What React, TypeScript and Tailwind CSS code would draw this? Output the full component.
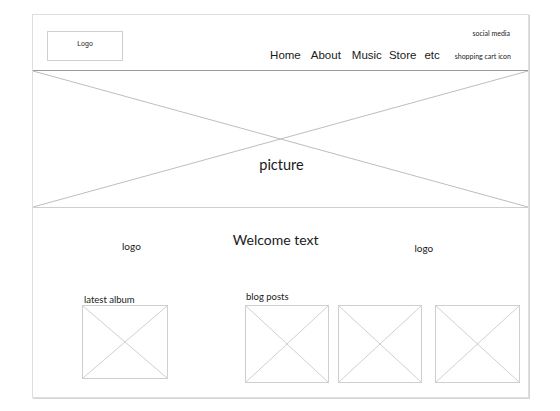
import React from "react";

function CrossBox({ className }: { className?: string }) {
  return (
    <div className={"relative border border-[#cfcfcf] " + (className ?? "")}>
      <svg className="absolute inset-0 h-full w-full" preserveAspectRatio="none" viewBox="0 0 100 100">
        <line x1="0" y1="0" x2="100" y2="100" stroke="#cfcfcf" strokeWidth="1" vectorEffect="non-scaling-stroke" />
        <line x1="100" y1="0" x2="0" y2="100" stroke="#cfcfcf" strokeWidth="1" vectorEffect="non-scaling-stroke" />
      </svg>
    </div>
  );
}

export default function App() {
  return (
    <div className="h-[411px] w-[560px] bg-white pl-[32px] pt-[14px] font-['Lato',sans-serif] text-[#1a1a1a]">
      <div className="flex h-[384px] w-[497px] flex-col border border-[#dedede] shadow-[1px_1px_0_#d6d6d6]">
        {/* header */}
        <div className="flex h-[56px] shrink-0 border-b border-[#9a9a9a]">
          <div className="ml-[14px] mt-[16px] flex h-[30px] w-[76px] items-start justify-center border border-[#cfcfcf] pt-[7px] font-['Liberation_Sans',sans-serif] text-[7px]">
            Logo
          </div>
          <div className="ml-auto mr-[17px] flex flex-col items-end">
            <div className="mr-[1px] mt-[15px] text-[7px] leading-none">social media</div>
            <div className="mt-[13px] flex items-baseline">
              <nav className="flex font-['Liberation_Sans',sans-serif] text-[11.5px] leading-none">
                <span>Home</span>
                <span className="ml-[10px]">About</span>
                <span className="ml-[11px]">Music</span>
                <span className="ml-[7px]">Store</span>
                <span className="ml-[8px]">etc</span>
              </nav>
              <span className="ml-[15px] text-[7px]">shopping cart icon</span>
            </div>
          </div>
        </div>

        {/* picture */}
        <div className="relative h-[137px] shrink-0 border-b border-[#cfcfcf]">
          <svg className="absolute inset-0 h-full w-full" preserveAspectRatio="none" viewBox="0 0 100 100">
            <line x1="0" y1="0" x2="100" y2="100" stroke="#bdbdbd" strokeWidth="1" vectorEffect="non-scaling-stroke" />
            <line x1="100" y1="0" x2="0" y2="100" stroke="#bdbdbd" strokeWidth="1" vectorEffect="non-scaling-stroke" />
          </svg>
          <div className="relative flex justify-center pl-[2px] pt-[87px] text-[14.5px] leading-none">picture</div>
        </div>

        {/* content */}
        <div className="flex flex-1 flex-col">
          <div className="flex h-[86px] items-start">
            <div className="ml-[89px] mt-[33px] text-[10px] leading-none">logo</div>
            <div className="ml-[92px] mt-[25px] text-[14px] leading-none">Welcome text</div>
            <div className="ml-[96px] mt-[35px] text-[10px] leading-none">logo</div>
          </div>
          <div className="flex items-start">
            <div className="ml-[49px] mt-[1px] flex flex-col">
              <div className="ml-[2px] text-[9.5px] leading-none">latest album</div>
              <CrossBox className="h-[74px] w-[86px]" />
            </div>
            <div className="ml-[77px] flex flex-col">
              <div className="-mt-[2px] ml-[1px] text-[9.5px] leading-none">blog posts</div>
              <div className="mt-[3px] flex gap-[9px]">
                <CrossBox className="h-[78px] w-[84px]" />
                <CrossBox className="h-[78px] w-[84px]" />
                <CrossBox className="ml-[4px] h-[78px] w-[85px]" />
              </div>
            </div>
          </div>
        </div>
      </div>
    </div>
  );
}
